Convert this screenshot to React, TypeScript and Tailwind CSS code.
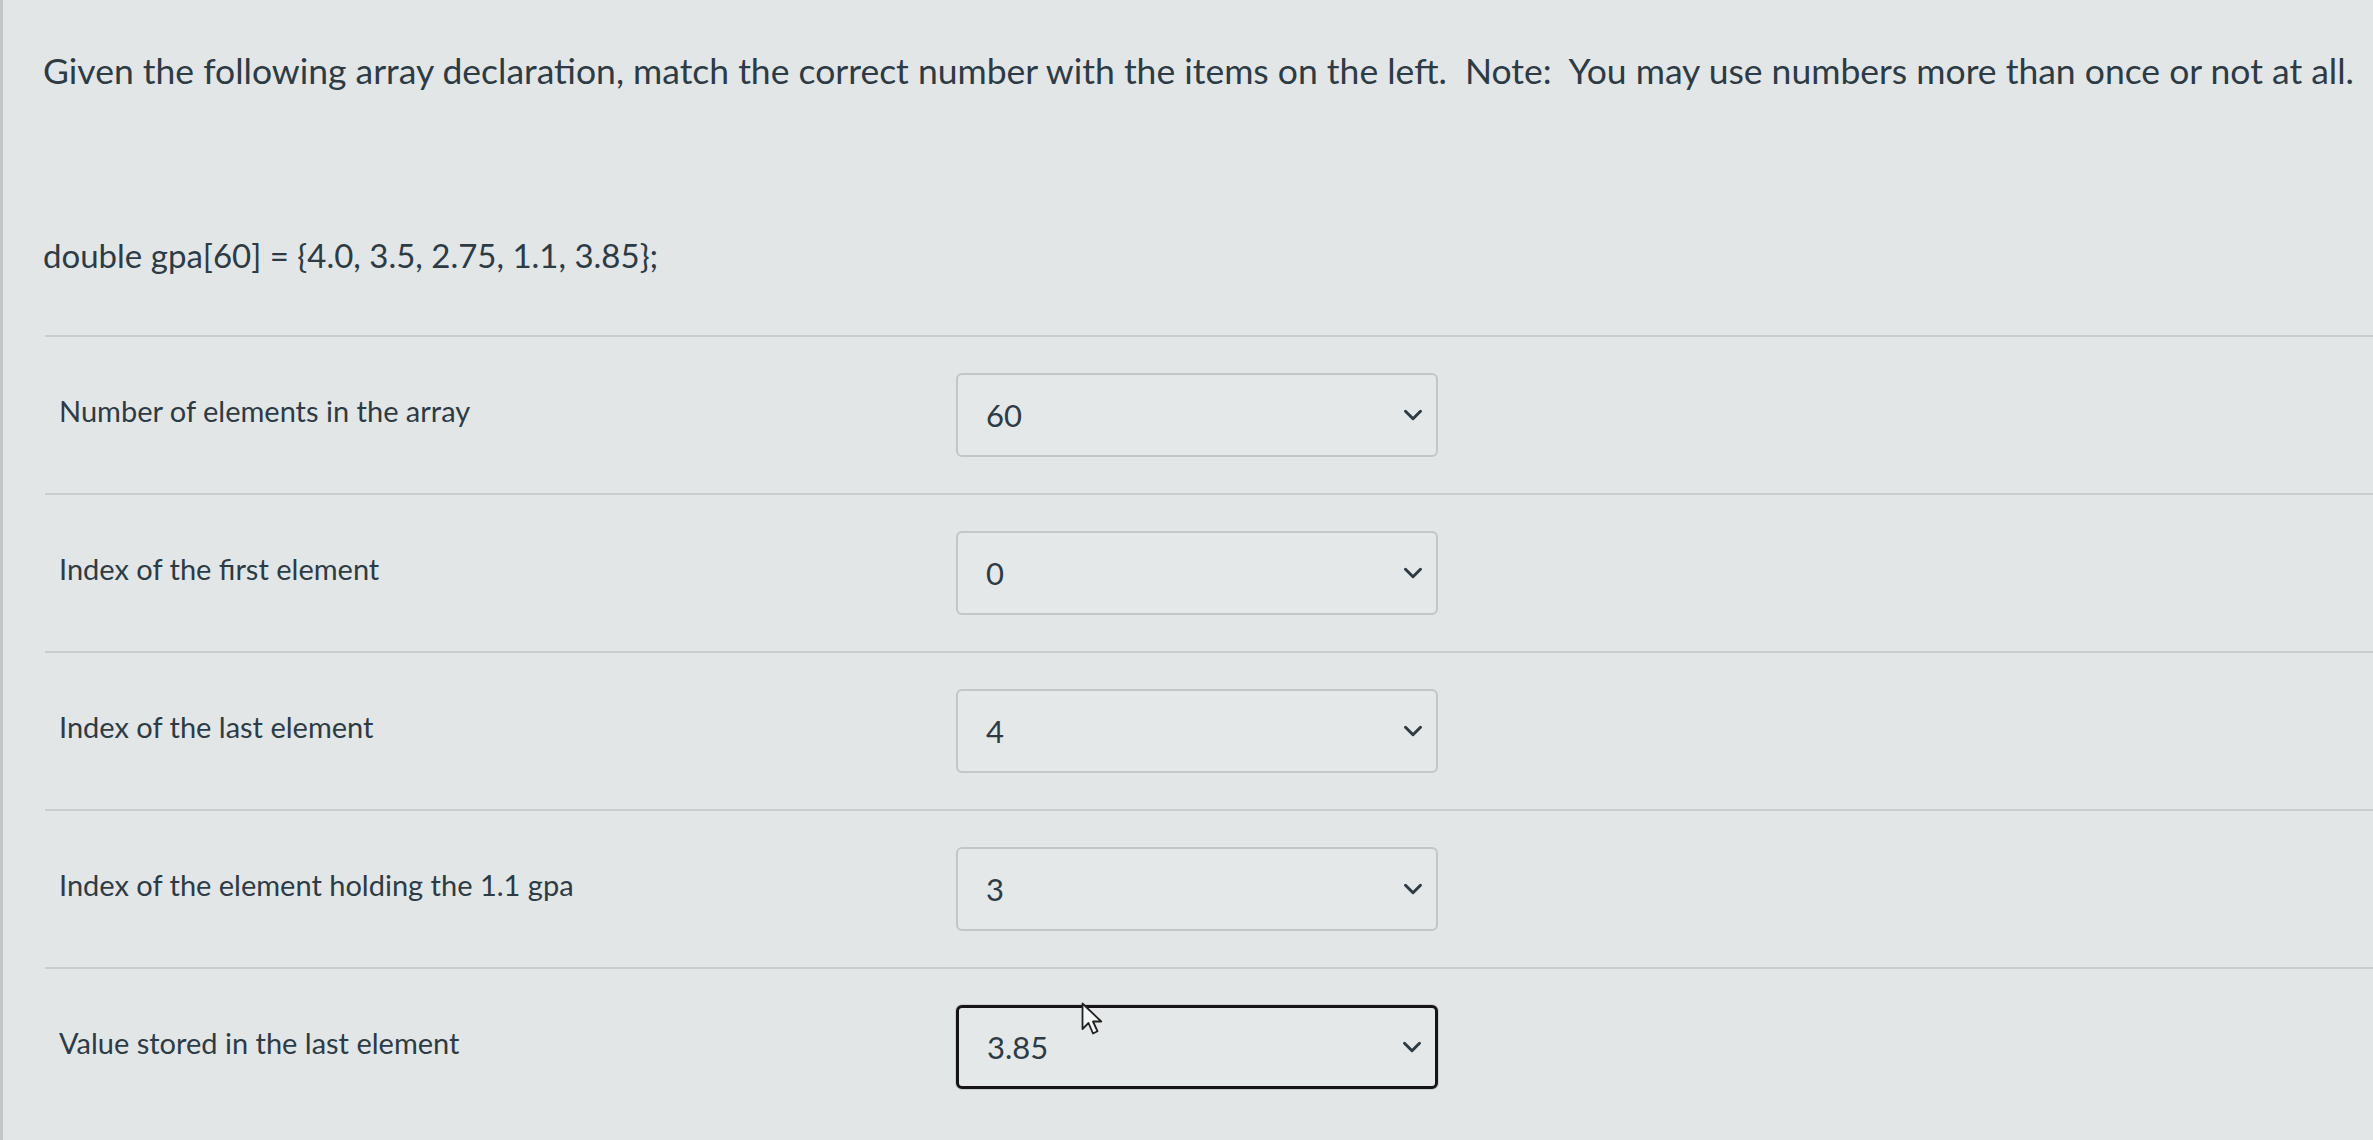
import { ChevronDown } from "lucide-react"

interface Item {
  label: string
  value: string
  focused?: boolean
}

const items: Item[] = [
  { label: "Number of elements in the array", value: "60" },
  { label: "Index of the first element", value: "0" },
  { label: "Index of the last element", value: "4" },
  { label: "Index of the element holding the 1.1 gpa", value: "3" },
  { label: "Value stored in the last element", value: "3.85", focused: true },
]

function Cursor() {
  return (
    <svg className="absolute left-[122px] top-[-6px] w-[24px] h-[36px]" viewBox="0 0 16 24" fill="none">
      <path
        d="M1 1 L1 18 L5 14 L8 21 L11 19.5 L8 13 L13.5 13 Z"
        fill="#f4f5f5"
        stroke="#222"
        strokeWidth={1.2}
        strokeLinejoin="round"
      />
    </svg>
  )
}

function Dropdown({ value, focused }: { value: string; focused?: boolean }) {
  return (
    <div
      className={`relative flex items-center justify-between w-[482px] h-[84px] pl-[28px] pr-[8px] rounded-[6px] bg-[#e5e8e9] ${
        focused ? "border-[3px] border-[#151515] ring-1 ring-[#c9cdd0]" : "border-2 border-[#c1c6c9]"
      }`}
    >
      <span className="text-[31px] text-[#2d3b45]">{value}</span>
      <ChevronDown className="w-[30px] h-[30px] text-[#2d3b45]" strokeWidth={2.4} />
      {focused && <Cursor />}
    </div>
  )
}

export default function App() {
  return (
    <div className="min-h-screen bg-[#e3e6e7] border-l-[3px] border-[#c3c7ca] font-['Lato',_sans-serif] text-[#2d3b45] overflow-hidden">
      <div className="pl-[40px] pt-[49px]">
        <p className="text-[35.5px] leading-[44px] whitespace-nowrap">
          Given the following array declaration, match the correct number with the items on the left.&nbsp; Note:&nbsp; You may use numbers more than once or not at all.
        </p>
        <p className="mt-[140px] text-[33px] leading-[44px]">double gpa[60] = {"{"}4.0, 3.5, 2.75, 1.1, 3.85{"}"};</p>
      </div>

      <div className="ml-[42px] mt-[58px]">
        {items.map((item) => (
          <div key={item.label} className="flex items-center h-[158px] border-t-2 border-[#c9cdd0]">
            <div className="w-[911px] pl-[14px] pb-[8px] text-[29px] leading-[36px]">{item.label}</div>
            <Dropdown value={item.value} focused={item.focused} />
          </div>
        ))}
      </div>
    </div>
  )
}
